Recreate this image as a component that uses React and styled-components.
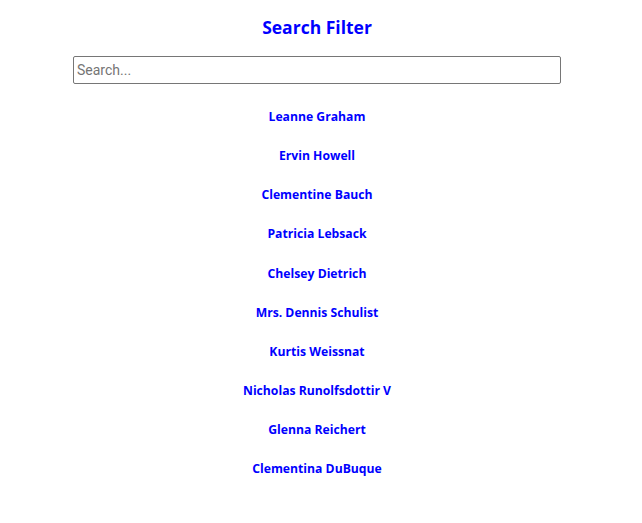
import styled, { createGlobalStyle } from "styled-components";

const GlobalStyle = createGlobalStyle`
    body {
        margin: 0;
        background: #ffffff;
        font-family: "Open Sans", "Noto Sans", sans-serif;
    }
`;

const Main = styled.div`
    display: flex;
    flex-direction: column;
    align-items: center;
    padding-right: 8px;
`;

const Title = styled.h2`
    margin: 15px 0 17px;
    font-size: 17.5px;
    line-height: 24px;
    font-weight: 700;
    color: #0000ff;
`;

const SearchInput = styled.input`
    box-sizing: border-box;
    width: 488px;
    height: 28px;
    padding: 0 3px;
    border: 1px solid #767676;
    border-radius: 2px;
    font-family: Roboto, "Liberation Sans", sans-serif;
    font-size: 14px;
    color: #000;
    outline: none;

    &::placeholder {
        color: #757575;
    }
`;

const NameList = styled.ul`
    list-style: none;
    margin: 13px 0 0;
    padding: 0;
    display: flex;
    flex-direction: column;
    align-items: center;
`;

const NameItem = styled.li`
    line-height: 39.15px;
    font-size: 12.2px;
    font-weight: 700;
    color: #0000ff;
`;

const users = [
    'Leanne Graham',
    'Ervin Howell',
    'Clementine Bauch',
    'Patricia Lebsack',
    'Chelsey Dietrich',
    'Mrs. Dennis Schulist',
    'Kurtis Weissnat',
    'Nicholas Runolfsdottir V',
    'Glenna Reichert',
    'Clementina DuBuque',
];

const App = () => {
    return <>
        <GlobalStyle />
        <Main>
            <Title>Search Filter</Title>
            <SearchInput placeholder="Search..." />
            <NameList>
                {users.map((name) => <NameItem key={name}>{name}</NameItem>)}
            </NameList>
        </Main>
    </>
}

export default App;
